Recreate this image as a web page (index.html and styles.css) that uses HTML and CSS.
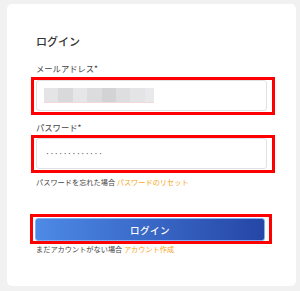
FILE: index.html
```html
<!DOCTYPE html>
<html lang="ja">
<head>
<meta charset="utf-8">
<title>ログイン</title>
<link rel="stylesheet" href="styles.css">
</head>
<body>
<div class="card">
  <h1 class="title">ログイン</h1>
  <div class="label label-email">メールアドレス*</div>
  <div class="mark">
    <div class="input">
      <div class="mosaic">
        <span class="m1"></span><span class="m2"></span><span class="m3"></span><span class="m4"></span><span class="m5"></span><span class="m6"></span><span class="m7"></span><span class="m8"></span>
      </div>
    </div>
  </div>
  <div class="label label-pw">パスワード*</div>
  <div class="mark">
    <div class="input input-pw"><span class="dots">·············</span></div>
  </div>
  <div class="note note-forgot">パスワードを忘れた場合 <a class="link" href="#">パスワードのリセット</a></div>
  <div class="mark mark-btn">
    <button class="btn" type="button">ログイン</button>
  </div>
  <div class="note">まだアカウントがない場合 <a class="link" href="#">アカウント作成</a></div>
</div>
</body>
</html>
```
FILE: styles.css
```css
html, body {
  margin: 0;
  padding: 0;
}
body {
  background: #f1f1f1;
  font-family: "Noto Sans CJK JP", "Noto Sans", sans-serif;
  color: #444;
  width: 300px;
  height: 291px;
  overflow: hidden;
}
.card {
  box-sizing: border-box;
  margin: 4px 0 0 7px;
  width: 289px;
  height: 282px;
  background: #fff;
  border-radius: 5px;
  padding: 30px 0 0 24px;
}
.title {
  margin: 0 0 0 5px;
  font-size: 11px;
  line-height: 15px;
  font-weight: 500;
  color: #333;
}
.label {
  margin-left: 5px;
  font-size: 8.3px;
  line-height: 12px;
  color: #444;
}
.label-email {
  margin-top: 13px;
  margin-bottom: 3px;
}
.label-pw {
  margin-top: 6px;
  margin-bottom: 2px;
}
.mark {
  width: 244px;
  box-sizing: border-box;
  border: 3px solid #f00;
  padding: 0 5px 1px 2px;
}
.input {
  box-sizing: border-box;
  height: 31px;
  border: 1px solid #dfe1e5;
  border-radius: 3px;
  background: #fff;
  padding: 7px 0 0 7px;
}
.mosaic {
  display: flex;
  width: 110px;
  height: 14px;
  border-bottom: 1px solid #f4d8da;
}
.mosaic span {
  height: 14px;
}
.m1 { width: 14px; background: #e4e4e6; }
.m2 { width: 15px; background: #d9d9db; }
.m3 { width: 14px; background: #e6e6e8; }
.m4 { width: 15px; background: #dcdcde; }
.m5 { width: 14px; background: #d3d3d5; }
.m6 { width: 14px; background: #dedee0; }
.m7 { width: 15px; background: #e4e4e6; }
.m8 { width: 9px; background: #e9e9eb; }
.input-pw {
  padding: 0 0 0 9px;
  display: flex;
  align-items: center;
}
.dots {
  font-family: "DejaVu Sans", sans-serif;
  font-size: 9px;
  line-height: 10px;
  letter-spacing: 1.55px;
  color: #555;
}
.note {
  margin-left: 5px;
  font-size: 7.2px;
  line-height: 10px;
  color: #444;
  white-space: nowrap;
}
.note-forgot {
  margin-top: 4px;
  margin-bottom: 27px;
}
.link {
  color: #f5a524;
  text-decoration: none;
}
.mark-btn {
  width: 242px;
  margin-left: -1px;
  padding: 1px 4px 0 2px;
}
.btn {
  display: block;
  box-sizing: border-box;
  width: 100%;
  height: 23px;
  border: 1px solid #7fb0f5;
  border-radius: 3px;
  background: linear-gradient(to right, #4d8ae6, #2546a6);
  color: #fff;
  font-family: "Noto Sans CJK JP", "Noto Sans", sans-serif;
  font-size: 9.5px;
  font-weight: 500;
  padding: 0;
  letter-spacing: 0.5px;
}
```
